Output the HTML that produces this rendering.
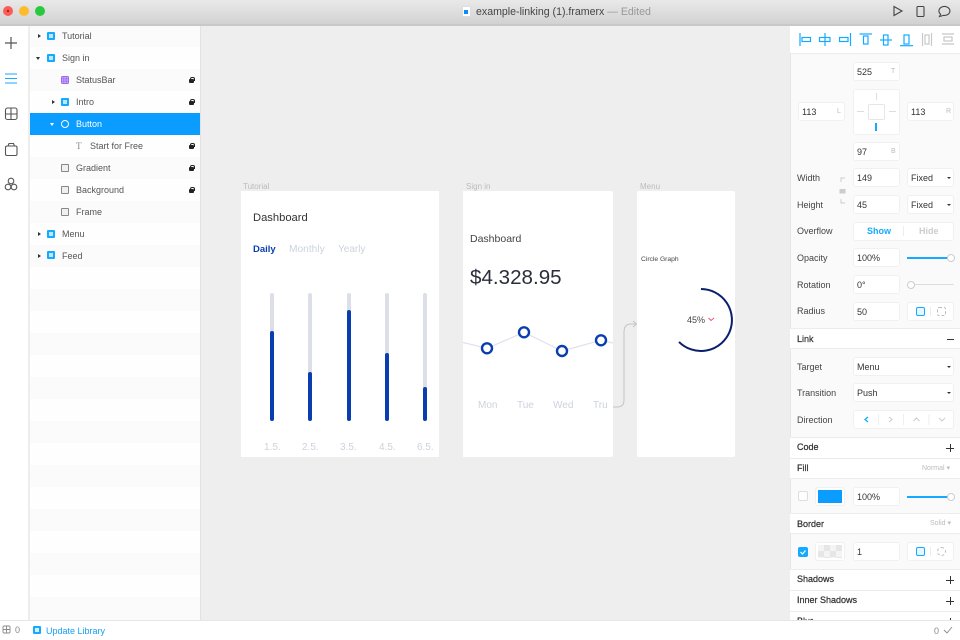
<!DOCTYPE html>
<html><head><meta charset="utf-8"><style>
*{box-sizing:border-box}
html,body{margin:0;padding:0}
body{width:960px;height:640px;overflow:hidden;position:relative;background:#eee;font-family:"Liberation Sans",sans-serif;font-size:9px;color:#444}
.a,.t,.r,.l,.i,.f{position:absolute}
.t{white-space:nowrap;line-height:12px}
.r{left:30px;width:170px;height:22px}
.l{color:#555;font-size:9px;line-height:12px;white-space:nowrap}
.i{width:8px;height:8px;border:2px solid #14aaff;background:#bfe6ff;border-radius:1px}
.g{width:8px;height:8px;border:1px solid #888;background:#f0f0f0;border-radius:1px;position:absolute}
.lock{position:absolute;left:189px;width:5px;height:4px;background:#222;border-radius:1px}
.lock:before{content:"";position:absolute;left:1px;top:-2px;width:3px;height:3px;border:1px solid #222;border-bottom:0;border-radius:2px 2px 0 0}
.tri{position:absolute;width:0;height:0;border-left:3px solid #333;border-top:2px solid transparent;border-bottom:2px solid transparent}
.trd{position:absolute;width:0;height:0;border-top:3px solid #333;border-left:2px solid transparent;border-right:2px solid transparent}
.f{background:#fff;border:1px solid #f0f0f0;border-radius:3px;font-size:9px;color:#333;line-height:18px;padding-left:3px;height:19px;white-space:nowrap}
.p{color:#444;font-size:9px;line-height:12px;position:absolute;white-space:nowrap;left:797px}
.b{color:#333;font-size:9px;-webkit-text-stroke:.25px #333;line-height:12px;position:absolute;white-space:nowrap;left:797px}
.h{position:absolute;left:790px;width:170px;height:1px;background:#ececec}
.s{position:absolute;font-size:7px;color:#bbb;line-height:10px}
.dd{position:absolute;width:0;height:0;border-top:2.5px solid #333;border-left:2px solid transparent;border-right:2px solid transparent}
.plus{position:absolute;left:946px;width:8px;height:8px;background:linear-gradient(#333,#333) center/8px 1px no-repeat,linear-gradient(#333,#333) center/1px 8px no-repeat}
.bar{position:absolute;width:4px;border-radius:2px;background:#dcdfe8}
.bf{position:absolute;width:4px;border-radius:2px;background:#0a3eb0;bottom:0;left:0}
.lb{position:absolute;font-size:10px;color:#cdd2de;line-height:12px;white-space:nowrap}
</style></head><body>

<div class="a" style="left:0;top:0;width:960px;height:26px;background:linear-gradient(#e9e9e9,#d2d2d2);border-bottom:2px solid #c8c8c8"></div>
<div class="a" style="left:3px;top:6px;width:10px;height:10px;border-radius:50%;background:#fc5c57"></div>
<div class="a" style="left:7px;top:10px;width:2px;height:2px;border-radius:50%;background:#7a1512"></div>
<div class="a" style="left:19px;top:6px;width:10px;height:10px;border-radius:50%;background:#fdbc2e"></div>
<div class="a" style="left:35px;top:6px;width:10px;height:10px;border-radius:50%;background:#28c83f"></div>
<div class="a" style="left:462px;top:6px;width:9px;height:11px;background:#fff;border:1px solid #ddd"></div>
<div class="a" style="left:464px;top:10px;width:4px;height:4px;background:#0a8cff"></div>
<div class="t" style="left:476px;top:5px;font-size:10.6px;line-height:14px;color:#444">example-linking (1).framerx <span style="color:#999">— Edited</span></div>
<svg class="a" style="left:890px;top:3px" width="70" height="16" fill="none" stroke="#444" stroke-width="1.1"><path d="M4 3.500 L12 8 L4 12.500Z"/><rect x="27" y="3.500" width="7" height="10" rx="1"/><path d="M50.600 11.200 A5.500 4.500 0 1 1 53.500 12.400 L49.500 13.500Z"/></svg>

<div class="a" style="left:0;top:26px;width:28px;height:594px;background:#fff"></div>
<div class="a" style="left:28px;top:26px;width:2px;height:594px;background:#ededed"></div>
<svg class="a" style="left:0;top:26px" width="28" height="180" fill="none" stroke="#555" stroke-width="1.1">
<path d="M11 11 V23 M5 17 H17" stroke-width="1.2"/>
<path d="M5 48 H17 M5 52.500 H17 M5 57 H17" stroke="#14aaff"/>
<rect x="5.500" y="82" width="11.500" height="11.500" rx="2"/><path d="M11 82 V93.500 M5.500 88 H17"/>
<rect x="5.500" y="120" width="11.500" height="9.500" rx="1.500"/><path d="M8 120 L9 117.500 H13.500 L14.500 120"/>
<circle cx="11" cy="155" r="2.800"/><circle cx="8" cy="161" r="2.800"/><circle cx="14" cy="161" r="2.800"/>
</svg>

<div class="a" style="left:30px;top:26px;width:170px;height:594px;background:#fefefe"></div>
<div class="r" style="top:26px;height:21px;background:#fbfbfb"></div>
<div class="r" style="top:69px;background:#fbfbfb"></div>
<div class="r" style="top:113px;background:#0a9dff"></div>
<div class="r" style="top:157px;background:#fbfbfb"></div>
<div class="r" style="top:201px;background:#fbfbfb"></div>
<div class="r" style="top:245px;background:#fbfbfb"></div>
<div class="r" style="top:289px;background:#fbfbfb"></div>
<div class="r" style="top:333px;background:#fbfbfb"></div>
<div class="r" style="top:377px;background:#fbfbfb"></div>
<div class="r" style="top:421px;background:#fbfbfb"></div>
<div class="r" style="top:465px;background:#fbfbfb"></div>
<div class="r" style="top:509px;background:#fbfbfb"></div>
<div class="r" style="top:553px;background:#fbfbfb"></div>
<div class="r" style="top:597px;height:23px;background:#fbfbfb"></div>
<div class="a" style="left:200px;top:26px;width:1px;height:594px;background:#e2e2e2"></div>

<div class="tri" style="left:38px;top:34px"></div><div class="i" style="left:47px;top:32px"></div><div class="l" style="left:62px;top:30px">Tutorial</div>
<div class="trd" style="left:36px;top:57px"></div><div class="i" style="left:47px;top:54px"></div><div class="l" style="left:62px;top:52px">Sign in</div>
<svg class="a" style="left:61px;top:76px" width="8" height="8"><rect x=".5" y=".5" width="7" height="7" rx="1" fill="#cdb5ff" stroke="#9a6cf5"/><path d="M2.800 1V7M5.200 1V7M1 2.800H7M1 5.200H7" stroke="#9a6cf5" stroke-width=".8"/></svg><div class="l" style="left:76px;top:74px">StatusBar</div><div class="lock" style="top:79px"></div>
<div class="tri" style="left:52px;top:100px"></div><div class="i" style="left:61px;top:98px"></div><div class="l" style="left:76px;top:96px">Intro</div><div class="lock" style="top:101px"></div>
<div class="trd" style="left:50px;top:123px;border-top-color:#fff"></div><div class="a" style="left:61px;top:120px;width:8px;height:8px;border:1px solid #fff;border-radius:50%"></div><div class="l" style="left:76px;top:118px;color:#fff">Button</div>
<div class="t" style="left:76px;top:140px;font-family:'Liberation Serif',serif;font-size:9px;color:#888">T</div><div class="l" style="left:90px;top:140px">Start for Free</div><div class="lock" style="top:145px"></div>
<div class="g" style="left:61px;top:164px"></div><div class="l" style="left:76px;top:162px">Gradient</div><div class="lock" style="top:167px"></div>
<div class="g" style="left:61px;top:186px"></div><div class="l" style="left:76px;top:184px">Background</div><div class="lock" style="top:189px"></div>
<div class="g" style="left:61px;top:208px"></div><div class="l" style="left:76px;top:206px">Frame</div>
<div class="tri" style="left:38px;top:232px"></div><div class="i" style="left:47px;top:230px"></div><div class="l" style="left:62px;top:228px">Menu</div>
<div class="tri" style="left:38px;top:254px"></div><div class="i" style="left:47px;top:251px"></div><div class="l" style="left:62px;top:250px">Feed</div>

<div class="t" style="left:243px;top:181px;font-size:8px;color:#bbb">Tutorial</div>
<div class="a" style="left:241px;top:191px;width:198px;height:266px;background:#fff;overflow:hidden">
<div class="t" style="left:12px;top:20px;font-size:11.2px;line-height:14px;color:#333">Dashboard</div>
<div class="t" style="left:12px;top:53px;font-size:9.5px;font-weight:bold;color:#0a3eb0">Daily</div>
<div class="t" style="left:48px;top:53px;font-size:10.2px;color:#cdd2de">Monthly</div>
<div class="t" style="left:97px;top:53px;font-size:10px;color:#cdd2de">Yearly</div>
<div class="bar" style="left:29px;top:102px;height:128px"><div class="bf" style="height:90px"></div></div>
<div class="bar" style="left:67px;top:102px;height:128px"><div class="bf" style="height:49px"></div></div>
<div class="bar" style="left:106px;top:102px;height:128px"><div class="bf" style="height:111px"></div></div>
<div class="bar" style="left:144px;top:102px;height:128px"><div class="bf" style="height:68px"></div></div>
<div class="bar" style="left:182px;top:102px;height:128px"><div class="bf" style="height:34px"></div></div>
<div class="lb" style="left:23px;top:251px">1.5.</div>
<div class="lb" style="left:61px;top:251px">2.5.</div>
<div class="lb" style="left:99px;top:251px">3.5.</div>
<div class="lb" style="left:138px;top:251px">4.5.</div>
<div class="lb" style="left:176px;top:251px">6.5.</div>
</div>

<div class="t" style="left:466px;top:181px;font-size:8px;color:#bbb">Sign in</div>
<div class="a" style="left:463px;top:191px;width:150px;height:266px;background:#fff;border-radius:0 2px 2px 0;overflow:hidden">
<div class="t" style="left:7px;top:42px;font-size:10.5px;line-height:13px;color:#444">Dashboard</div>
<div class="t" style="left:7px;top:75px;font-size:20.6px;line-height:24px;color:#2a2e3a">$4.328.95</div>
<svg class="a" style="left:0;top:120px" width="150" height="60" fill="none"><path d="M0 31.500 L24 37.300 L61 21.300 L99 40 L138 29.300 L150 32" stroke="#dfe2ea" stroke-width="1.200"/><g stroke="#0a3eb0" stroke-width="2.400" fill="#fff"><circle cx="24" cy="37.300" r="5"/><circle cx="61" cy="21.300" r="5"/><circle cx="99" cy="40" r="5"/><circle cx="138" cy="29.300" r="5"/></g></svg>
<div class="lb" style="left:15px;top:209px">Mon</div>
<div class="lb" style="left:54px;top:209px">Tue</div>
<div class="lb" style="left:90px;top:209px">Wed</div>
<div class="lb" style="left:130px;top:209px">Tru</div>
</div>

<svg class="a" style="left:610px;top:315px" width="30" height="100" fill="none" stroke="#c4c4c4" stroke-width="1"><path d="M3 92 H7 Q14 92 14 85 V17 Q14 9 21 9 H26 M23 6 L26.500 9 L23 12"/></svg>

<div class="t" style="left:640px;top:181px;font-size:8px;color:#bbb">Menu</div>
<div class="a" style="left:637px;top:191px;width:98px;height:266px;background:#fff;border-radius:2px;overflow:hidden">
<div class="t" style="left:4px;top:63px;font-size:6.7px;color:#444">Circle Graph</div>
<svg class="a" style="left:0;top:80px" width="98" height="100" fill="none"><path d="M64 18 A31 31 0 1 1 42 70.900" stroke="#0a1e6e" stroke-width="2"/><path d="M71.500 47 L74 49.500 L77 47" stroke="#f0506a" stroke-width="1"/></svg>
<div class="t" style="left:50px;top:123px;font-size:9px;color:#444">45%</div>
</div>

<div class="a" style="left:790px;top:26px;width:170px;height:594px;background:#fafafa;border-left:1px solid #e6e6e6"></div>
<div class="a" style="left:790px;top:26px;width:170px;height:28px;background:#fff"></div>
<div class="h" style="top:53px"></div>
<svg class="a" style="left:790px;top:26px" width="170" height="28" fill="none" stroke="#14aaff" stroke-width="1.2">
<path d="M10 7V20"/><rect x="12" y="11.500" width="8.500" height="4"/>
<path d="M35 7V20"/><rect x="29.500" y="11.500" width="10.500" height="4"/>
<path d="M60.500 7V20"/><rect x="49.500" y="11.500" width="8.500" height="4"/>
<path d="M69.500 8H82"/><rect x="73.500" y="10" width="4.500" height="8"/>
<path d="M90 14H102"/><rect x="93.500" y="9" width="4.500" height="10"/>
<path d="M110 19.700H123"/><rect x="114" y="9" width="5" height="9"/>
<g stroke="#c8c8c8"><path d="M132.500 7V20M141.500 7V20"/><rect x="135" y="9" width="4" height="9"/><path d="M152 8H164M152 18H164"/><rect x="154" y="11" width="8" height="4"/></g>
</svg>

<div class="f" style="left:853px;top:62px;width:47px">525</div><div class="s" style="left:891px;top:67px">T</div>
<div class="f" style="left:798px;top:102px;width:47px">113</div><div class="s" style="left:837px;top:107px">L</div>
<div class="f" style="left:907px;top:102px;width:47px">113</div><div class="s" style="left:946px;top:107px">R</div>
<div class="f" style="left:853px;top:142px;width:47px">97</div><div class="s" style="left:891px;top:147px">B</div>
<div class="a" style="left:853px;top:89px;width:47px;height:46px;background:#fff;border:1px solid #f0f0f0;border-radius:3px"></div>
<div class="a" style="left:868px;top:104px;width:17px;height:16px;border:1px solid #e6e6e6;border-radius:2px"></div>
<div class="a" style="left:876px;top:93px;width:1px;height:7px;background:#ddd"></div>
<div class="a" style="left:857px;top:111px;width:7px;height:1px;background:#ddd"></div>
<div class="a" style="left:889px;top:111px;width:7px;height:1px;background:#ddd"></div>
<div class="a" style="left:875px;top:123px;width:2px;height:8px;background:#14aaff"></div>

<div class="p" style="top:172px">Width</div><div class="f" style="left:853px;top:168px;width:47px">149</div><div class="f" style="left:907px;top:168px;width:47px">Fixed</div><div class="dd" style="left:947px;top:177px"></div>
<div class="p" style="top:199px">Height</div><div class="f" style="left:853px;top:195px;width:47px">45</div><div class="f" style="left:907px;top:195px;width:47px">Fixed</div><div class="dd" style="left:947px;top:204px"></div>
<svg class="a" style="left:838px;top:176px" width="10" height="30" fill="none" stroke="#ccc" stroke-width="1"><path d="M3 6V2H7M3 23V27H7"/><rect x="1.500" y="13" width="6" height="4.500" fill="#ccc" stroke="none"/></svg>

<div class="p" style="top:225px">Overflow</div><div class="f" style="left:853px;top:222px;width:101px"></div><div class="t" style="left:867px;top:225px;color:#14aaff;font-weight:bold">Show</div><div class="t" style="left:919px;top:225px;color:#ccc;font-weight:bold">Hide</div><div class="a" style="left:903px;top:226px;width:1px;height:10px;background:#eee"></div>
<div class="p" style="top:252px">Opacity</div><div class="f" style="left:853px;top:248px;width:47px">100%</div>
<div class="a" style="left:907px;top:257px;width:42px;height:2px;background:#14aaff"></div><div class="a" style="left:947px;top:254px;width:8px;height:8px;border-radius:50%;background:#fff;border:1px solid #ccc"></div>
<div class="p" style="top:279px">Rotation</div><div class="f" style="left:853px;top:275px;width:47px">0°</div>
<div class="a" style="left:910px;top:284px;width:44px;height:1px;background:#ddd"></div><div class="a" style="left:907px;top:281px;width:8px;height:8px;border-radius:50%;background:#fff;border:1px solid #ccc"></div>
<div class="p" style="top:305px">Radius</div><div class="f" style="left:853px;top:302px;width:47px">50</div><div class="f" style="left:907px;top:302px;width:47px"></div>
<div class="a" style="left:916px;top:307px;width:9px;height:9px;border:1.500px solid #14aaff;border-radius:2px;background:#e8f6ff"></div><div class="a" style="left:937px;top:307px;width:9px;height:9px;border:1px dashed #bbb;border-radius:2px"></div><div class="a" style="left:930px;top:307px;width:1px;height:9px;background:#eee"></div>

<div class="a" style="left:790px;top:328px;width:170px;height:21px;background:#fff;border-top:1px solid #ececec;border-bottom:1px solid #ececec"></div>
<div class="b" style="top:333px">Link</div><div class="a" style="left:947px;top:339px;width:7px;height:1px;background:#333"></div>
<div class="p" style="top:361px">Target</div><div class="f" style="left:853px;top:357px;width:101px">Menu</div><div class="dd" style="left:947px;top:366px"></div>
<div class="p" style="top:387px">Transition</div><div class="f" style="left:853px;top:383px;width:101px">Push</div><div class="dd" style="left:947px;top:392px"></div>
<div class="p" style="top:414px">Direction</div><div class="f" style="left:853px;top:410px;width:101px"></div>
<svg class="a" style="left:853px;top:410px" width="101" height="19" fill="none" stroke="#ccc"><path d="M15 7L12 9.500L15 12" stroke="#14aaff" stroke-width="1.300"/><path d="M36 7L39 9.500L36 12M60.500 11L63.500 8L66.500 11M86 8L89 11L92 8"/><path d="M25.500 4V15M50.500 4V15M76 4V15" stroke="#eee"/></svg>

<div class="a" style="left:790px;top:437px;width:170px;height:22px;background:#fff;border-top:1px solid #ececec;border-bottom:1px solid #ececec"></div>
<div class="b" style="top:441px">Code</div><div class="plus" style="top:444px"></div>
<div class="a" style="left:790px;top:459px;width:170px;height:20px;background:#fff;border-bottom:1px solid #ececec"></div>
<div class="b" style="top:462px">Fill</div><div class="t" style="left:922px;top:464px;font-size:7px;line-height:10px;color:#bbb">Normal ▾</div>
<div class="a" style="left:798px;top:491px;width:10px;height:10px;background:#fff;border:1px solid #ddd;border-radius:2px"></div>
<div class="a" style="left:815px;top:487px;width:30px;height:19px;background:#fff;border:1px solid #f0f0f0;border-radius:3px"></div>
<div class="a" style="left:818px;top:490px;width:24px;height:13px;background:#0a9dff"></div>
<div class="f" style="left:853px;top:487px;width:47px">100%</div>
<div class="a" style="left:907px;top:496px;width:42px;height:2px;background:#14aaff"></div><div class="a" style="left:947px;top:493px;width:8px;height:8px;border-radius:50%;background:#fff;border:1px solid #ccc"></div>

<div class="a" style="left:790px;top:513px;width:170px;height:21px;background:#fff;border-top:1px solid #ececec;border-bottom:1px solid #ececec"></div>
<div class="b" style="top:518px">Border</div><div class="t" style="left:930px;top:519px;font-size:7px;line-height:10px;color:#bbb">Solid ▾</div>
<div class="a" style="left:798px;top:547px;width:10px;height:10px;background:#14aaff;border-radius:2px"></div>
<svg class="a" style="left:798px;top:547px" width="10" height="10" fill="none" stroke="#fff" stroke-width="1.200"><path d="M2.500 5L4.500 7L7.500 3.500"/></svg>
<div class="a" style="left:815px;top:542px;width:30px;height:19px;background:#fff;border:1px solid #f0f0f0;border-radius:3px"></div>
<div class="a" style="left:818px;top:545px;width:24px;height:13px;background:repeating-conic-gradient(#e6e6e6 0 25%,#f4f4f4 0 50%) 0 0/12px 12px"></div>
<div class="f" style="left:853px;top:542px;width:47px">1</div>
<div class="f" style="left:907px;top:542px;width:47px"></div>
<div class="a" style="left:916px;top:547px;width:9px;height:9px;border:1.500px solid #14aaff;border-radius:2px;background:#e8f6ff"></div><div class="a" style="left:937px;top:547px;width:9px;height:9px;border:1px dashed #bbb;border-radius:50%"></div><div class="a" style="left:930px;top:547px;width:1px;height:9px;background:#eee"></div>

<div class="a" style="left:790px;top:569px;width:170px;height:51px;background:#fff;border-top:1px solid #ececec"></div>
<div class="h" style="top:590px"></div><div class="h" style="top:611px"></div>
<div class="b" style="top:573px">Shadows</div><div class="plus" style="top:576px"></div>
<div class="b" style="top:594px">Inner Shadows</div><div class="plus" style="top:597px"></div>
<div class="b" style="top:615px">Blur</div><div class="plus" style="top:618px"></div>

<div class="a" style="left:0;top:620px;width:960px;height:20px;background:#fff;border-top:1px solid #e6e6e6"></div>
<svg class="a" style="left:2px;top:625px" width="9" height="9" fill="none" stroke="#888" stroke-width=".9"><rect x="1" y="1" width="7" height="7" rx="1"/><path d="M4.500 1V8M1 4.500H8"/></svg>
<div class="t" style="left:15px;top:624px;font-size:9px;color:#888">0</div>
<div class="a" style="left:33px;top:626px;width:8px;height:8px;border:2px solid #14aaff;border-radius:1px;background:#d5efff"></div>
<div class="t" style="left:46px;top:625px;font-size:9px;color:#14a0f5">Update Library</div>
<div class="t" style="left:934px;top:625px;font-size:9px;color:#888">0</div>
<svg class="a" style="left:943px;top:625px" width="10" height="10" fill="none" stroke="#888" stroke-width=".9"><path d="M1 5L4 8L9 2"/></svg>

</body></html>
